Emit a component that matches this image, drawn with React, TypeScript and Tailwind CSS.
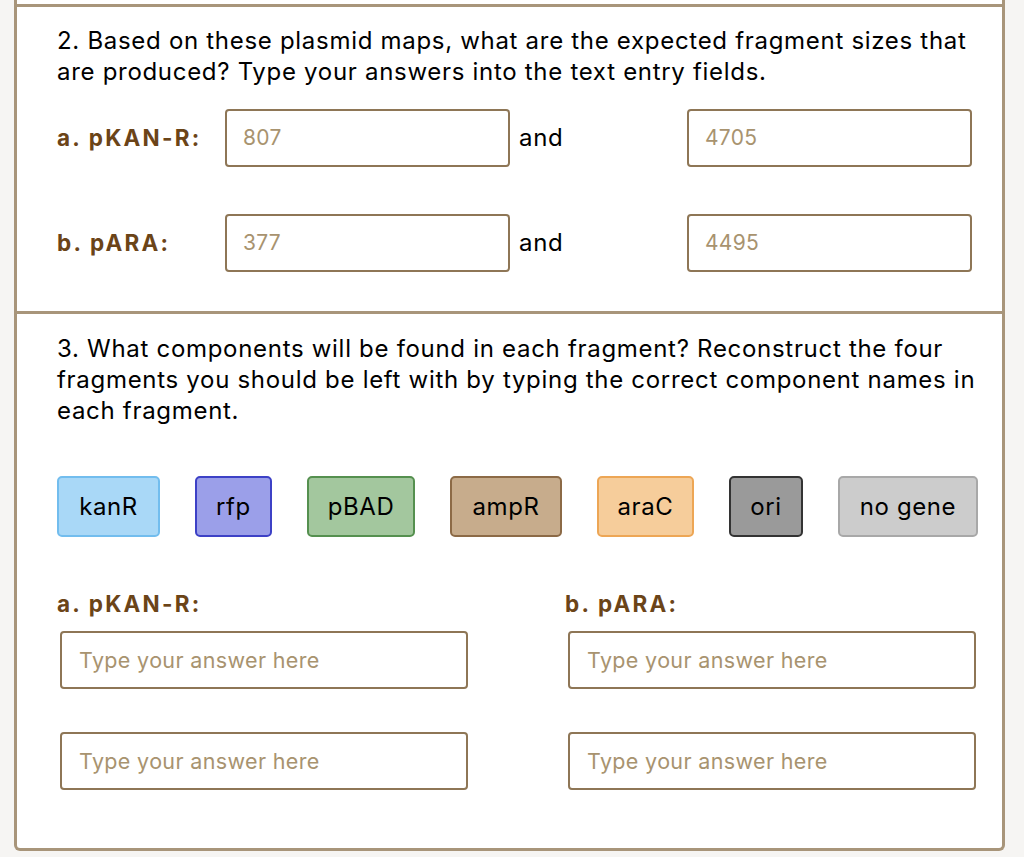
import React from 'react';

const font = { fontFamily: 'Inter, "Liberation Sans", Arial, sans-serif' };

const genes = [
  { name: 'kanR', cls: 'w-[103px] bg-[#a9d8f7] border-[#72bdee]' },
  { name: 'rfp', cls: 'w-[77px] bg-[#9b9fe9] border-[#3d41c6]' },
  { name: 'pBAD', cls: 'w-[108px] bg-[#a3c79e] border-[#55904f]' },
  { name: 'ampR', cls: 'w-[112px] bg-[#c7ac8c] border-[#8c6a46]' },
  { name: 'araC', cls: 'w-[97px] bg-[#f6cd9b] border-[#eda655]' },
  { name: 'ori', cls: 'w-[74px] bg-[#9a9a9a] border-[#333333]' },
  { name: 'no gene', cls: 'w-[140px] bg-[#cccccc] border-[#a8a8a8]' },
];

function SizeInput({ value }: { value: string }) {
  return (
    <input
      readOnly
      defaultValue={value}
      className="w-[285px] h-[58px] rounded border-2 border-[#8e7656] bg-white px-[16px] pb-[2px] text-[21px] tracking-[0.3px] text-[#a8936f] outline-none"
    />
  );
}

function AnswerInput() {
  return (
    <input
      placeholder="Type your answer here"
      className="w-[408px] h-[58px] rounded border-2 border-[#8e7656] bg-white px-[17px] text-[21.5px] tracking-[0.35px] text-[#a8936f] placeholder:text-[#a8936f] outline-none"
    />
  );
}

export default function App() {
  return (
    <div className="min-h-screen bg-[#f6f5f3] pl-[14px] pr-[19px]" style={font}>
      <div className="h-[851px] bg-white border-x-[3px] border-b-[3px] border-[#a8957a] rounded-b-md">
        <div className="h-[4px]" />

        {/* Question 2 */}
        <div className="border-t-[3px] border-[#a8957a] h-[307px] pl-[40px] pr-[20px] pt-[18px]">
          <p className="text-[24px] leading-[31px] tracking-[0.7px] text-black">
            2. Based on these plasmid maps, what are the expected fragment sizes that are produced? Type your answers into the text entry fields.
          </p>
          <div className="mt-[22px] flex items-center">
            <span className="w-[168px] text-[22.5px] font-bold tracking-[2.2px] text-[#6b4418]">a. pKAN-R:</span>
            <SizeInput value="807" />
            <span className="w-[177px] pl-[9px] text-[24px] tracking-[0.7px] text-black">and</span>
            <SizeInput value="4705" />
          </div>
          <div className="mt-[47px] flex items-center">
            <span className="w-[168px] text-[22.5px] font-bold tracking-[2.2px] text-[#6b4418]">b. pARA:</span>
            <SizeInput value="377" />
            <span className="w-[177px] pl-[9px] text-[24px] tracking-[0.7px] text-black">and</span>
            <SizeInput value="4495" />
          </div>
        </div>

        {/* Question 3 */}
        <div className="border-t-[3px] border-[#a8957a] pl-[40px] pr-[18px] pt-[19px]">
          <p className="text-[24px] leading-[31px] tracking-[0.7px] text-black">
            3. What components will be found in each fragment? Reconstruct the four fragments you should be left with by typing the correct component names in each fragment.
          </p>
          <div className="mt-[50px] flex gap-[35px]">
            {genes.map((g) => (
              <div
                key={g.name}
                className={`h-[61px] rounded-[5px] border-2 flex items-center justify-center text-[24px] tracking-[0.6px] text-black ${g.cls}`}
              >
                {g.name}
              </div>
            ))}
          </div>
          <div className="mt-[54px] grid grid-cols-2 gap-x-[100px] w-[916px]">
            <div>
              <div className="text-[22.5px] font-bold tracking-[2.2px] text-[#6b4418] leading-[26px]">a. pKAN-R:</div>
              <div className="mt-[14px] ml-[3px] flex flex-col gap-[43px]">
                <AnswerInput />
                <AnswerInput />
              </div>
            </div>
            <div>
              <div className="text-[22.5px] font-bold tracking-[2.2px] text-[#6b4418] leading-[26px]">b. pARA:</div>
              <div className="mt-[14px] ml-[3px] flex flex-col gap-[43px]">
                <AnswerInput />
                <AnswerInput />
              </div>
            </div>
          </div>
        </div>
      </div>
    </div>
  );
}
